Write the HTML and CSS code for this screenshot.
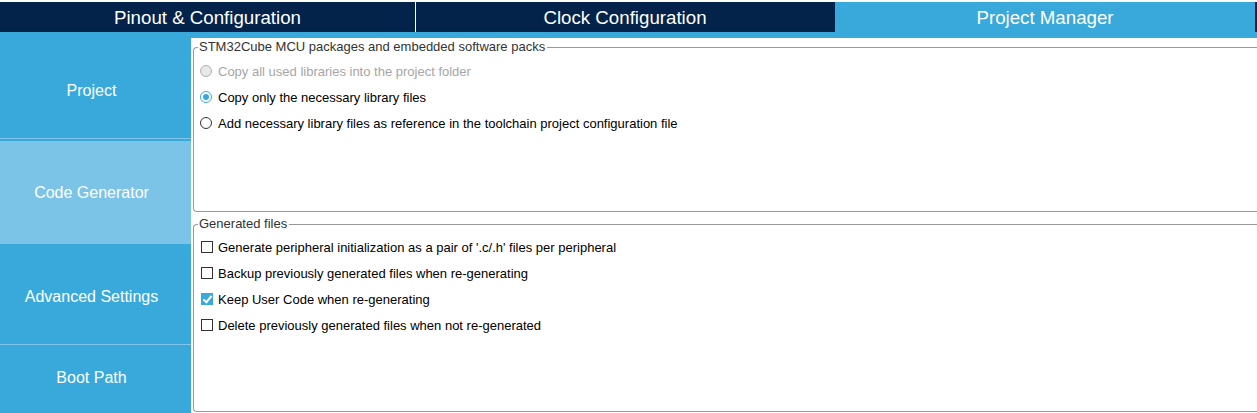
FILE: index.html
```html
<!DOCTYPE html>
<html lang="en">
<head>
    <meta charset="UTF-8">
    <meta name="viewport" content="width=device-width, initial-scale=1.0">
    <title>Project Manager</title>
    <link rel="stylesheet" href="styles.css">
</head>
<body>
    <div class="tabs">
        <div class="tab">Pinout &amp; Configuration</div>
        <div class="tab sep">Clock Configuration</div>
        <div class="tab active">Project Manager</div>
    </div>
    <div class="strip"></div>

    <div class="main">
        <div class="sidebar">
            <div class="side-item first">Project</div>
            <div class="side-item selected">Code Generator</div>
            <div class="side-item third">Advanced Settings</div>
            <div class="side-item last">Boot Path</div>
        </div>

        <div class="content">
            <fieldset class="group top">
                <legend>STM32Cube MCU packages and embedded software packs</legend>
                <label class="row disabled"><input type="radio" name="lib" disabled> Copy all used libraries into the project folder</label>
                <label class="row"><input type="radio" name="lib" checked> Copy only the necessary library files</label>
                <label class="row"><input type="radio" name="lib"> Add necessary library files as reference in the toolchain project configuration file</label>
            </fieldset>

            <fieldset class="group bottom">
                <legend>Generated files</legend>
                <label class="row"><input type="checkbox"> Generate peripheral initialization as a pair of '.c/.h' files per peripheral</label>
                <label class="row"><input type="checkbox"> Backup previously generated files when re-generating</label>
                <label class="row"><input type="checkbox" checked> Keep User Code when re-generating</label>
                <label class="row"><input type="checkbox"> Delete previously generated files when not re-generated</label>
            </fieldset>
        </div>
    </div>
</body>
</html>
```

FILE: styles.css
```css
body {
    margin: 0;
    font-family: "Liberation Sans", Arial, sans-serif;
    background: white;
    overflow: hidden;
}
.tabs {
    display: flex;
    height: 30px;
    margin-top: 2px;
    background-color: #03234b;
}
.tab {
    display: flex;
    align-items: center;
    justify-content: center;
    color: white;
    font-size: 18.7px;
    width: 415px;
    padding-top: 2px;
    box-sizing: border-box;
}
.tab.sep {
    width: 419px;
    border-left: 1px solid white;
}
.tab.active {
    width: 420px;
    margin-left: 1px;
    margin-right: 1px;
    background-color: #39a9dc;
}
.strip {
    height: 6px;
    background-color: #39a9dc;
}
.main {
    display: flex;
    height: 375px;
}
.sidebar {
    width: 191px;
    background-color: #39a9dc;
    flex-shrink: 0;
}
.side-item {
    display: flex;
    align-items: center;
    justify-content: center;
    color: white;
    font-size: 16px;
    padding-right: 8px;
    box-sizing: border-box;
}
.side-item.first {
    height: 101px;
    border-bottom: 1px solid #7fc6ea;
    margin-bottom: 2px;
    padding-top: 6px;
}
.side-item.selected {
    height: 103px;
    background-color: #7bc4e8;
}
.side-item.third {
    height: 101px;
    border-bottom: 1px solid #7fc6ea;
    padding-top: 5px;
}
.side-item.last {
    height: 64px;
    padding-top: 2px;
}
.content {
    flex: 1;
    padding-left: 2px;
    display: flex;
    flex-direction: column;
    gap: 3px;
}
.group {
    margin: 0;
    padding: 0 0 0 4px;
    border: 1px solid #999;
    border-right: none;
    border-radius: 4px 0 0 4px;
    min-width: 0;
    box-sizing: border-box;
}
.group legend {
    padding: 0 2px 0 1px;
    font-size: 13px;
    color: #333;
    line-height: 18px;
}
.group.top {
    height: 174px;
    padding-top: 2px;
}
.group.bottom {
    flex: 1;
    padding-top: 1px;
    margin-bottom: 1px;
}
.row {
    display: flex;
    align-items: center;
    height: 26px;
    font-size: 13px;
    color: #000;
    gap: 5px;
}
.row.disabled {
    color: #a6a6a6;
}
.row input {
    appearance: none;
    margin: 0;
    width: 12px;
    height: 12px;
    border: 1px solid #333;
    background: white;
    position: relative;
    flex-shrink: 0;
    box-sizing: border-box;
}
.row input[type="radio"] {
    border-radius: 50%;
    margin-left: 2px;
    margin-right: 1px;
}
.row input[type="radio"]:checked {
    border-color: #39a9dc;
}
.row input[type="radio"]:checked::after {
    content: "";
    position: absolute;
    left: 2px;
    top: 2px;
    width: 6px;
    height: 6px;
    border-radius: 50%;
    background-color: #39a9dc;
}
.row input[type="radio"]:disabled {
    border-color: #b0b0b0;
    background-color: #e8e8e8;
}
.row input[type="checkbox"] {
    margin-left: 3px;
}
.row input[type="checkbox"]:checked {
    background-color: #39a9dc;
    border-color: #39a9dc;
}
.row input[type="checkbox"]:checked::after {
    content: "";
    position: absolute;
    left: 3px;
    top: 0px;
    width: 3px;
    height: 7px;
    border: solid white;
    border-width: 0 2px 2px 0;
    transform: rotate(40deg);
}
```
